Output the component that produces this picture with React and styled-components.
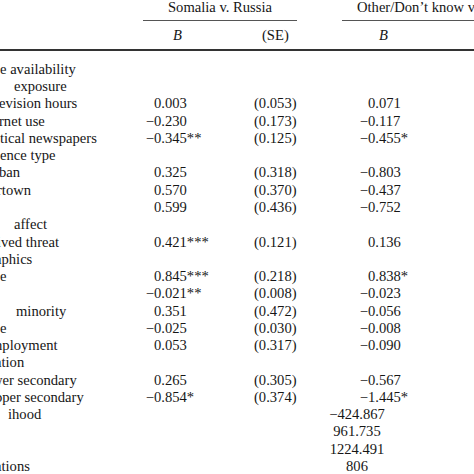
import React from "react";
import styled, { createGlobalStyle } from "styled-components";

const GlobalStyle = createGlobalStyle`
  html, body {
    margin: 0;
    padding: 0;
    background: #ffffff;
  }
  body {
    font-family: "Liberation Serif", "Times New Roman", serif;
    color: #161616;
  }
`;

const Page = styled.div`
  width: 474px;
  height: 474px;
  overflow: hidden;
  background: #ffffff;
  font-size: 14.6px;
  line-height: 17.26px;
`;

const Table = styled.div`
  display: flex;
  flex-direction: column;
  width: 560px;
`;

const Row = styled.div`
  display: grid;
  grid-template-columns: 143px 69px 85px 45px 218px;
  white-space: nowrap;
`;

const GroupRow = styled(Row)`
  height: 21px;
  line-height: 12px;
`;

const SubHeadRow = styled(Row)`
  padding: 6px 0 5px;
  border-bottom: 2px solid #333;
  margin-bottom: 9.6px;
`;

const GroupHead = styled.div`
  grid-column: ${(p) => p.$span};
  border-bottom: 1px solid #555;
  padding-top: 1px;
  text-align: ${(p) => (p.$left ? "left" : "center")};
  padding-left: ${(p) => p.$pad || 0}px;
`;

const ColHead = styled.div`
  grid-column: ${(p) => p.$col};
  font-style: ${(p) => (p.$italic ? "italic" : "normal")};
  text-align: ${(p) => (p.$center ? "center" : "left")};
  padding-left: ${(p) => p.$pad || 0}px;
`;

const Label = styled.div`
  grid-column: 1;
  text-indent: ${(p) => p.$x}px;
  overflow: hidden;
`;

const Cell = styled.div`
  grid-column: ${(p) => p.$col};
  padding-left: ${(p) => p.$pad}px;
`;

const StatCell = styled.div`
  grid-column: 3 / 6;
  text-align: center;
  padding-right: 58px;
`;

const Sign = styled.span`
  display: inline-block;
  width: 9px;
  text-align: right;
  text-indent: 0;
`;

function Num({ v }) {
  if (!v) return null;
  const neg = v.startsWith("−");
  return (
    <>
      <Sign>{neg ? "−" : ""}</Sign>
      {neg ? v.slice(1) : v}
    </>
  );
}

const rows = [
  { label: "e availability", x: 0 },
  { label: "exposure", x: 14 },
  { label: "evision hours", x: -1, b: "0.003", se: "(0.053)", o: "0.071" },
  { label: "rnet use", x: -1, b: "−0.230", se: "(0.173)", o: "−0.117" },
  { label: "tical newspapers", x: 0, b: "−0.345**", se: "(0.125)", o: "−0.455*" },
  { label: "ence type", x: 0 },
  { label: "ban", x: -1, b: "0.325", se: "(0.318)", o: "−0.803" },
  { label: "rtown", x: -3, b: "0.570", se: "(0.370)", o: "−0.437" },
  { label: "", x: 0, b: "0.599", se: "(0.436)", o: "−0.752" },
  { label: "affect", x: 14 },
  { label: "ived threat", x: -3, b: "0.421***", se: "(0.121)", o: "0.136" },
  { label: "aphics", x: -5 },
  { label: "e", x: 0, b: "0.845***", se: "(0.218)", o: "0.838*" },
  { label: "", x: 0, b: "−0.021**", se: "(0.008)", o: "−0.023" },
  { label: "minority", x: 16, b: "0.351", se: "(0.472)", o: "−0.056" },
  { label: "e", x: 0, b: "−0.025", se: "(0.030)", o: "−0.008" },
  { label: "mployment", x: -9, b: "0.053", se: "(0.317)", o: "−0.090" },
  { label: "ation", x: -5 },
  { label: "wer secondary", x: -8, b: "0.265", se: "(0.305)", o: "−0.567" },
  { label: "pper secondary", x: -5, b: "−0.854*", se: "(0.374)", o: "−1.445*" },
  { label: "ihood", x: 8, stat: "−424.867" },
  { label: "", x: 0, stat: "961.735" },
  { label: "", x: 0, stat: "1224.491" },
  { label: "ations", x: -5, stat: "806" },
];

export default function App() {
  return (
    <Page>
      <GlobalStyle />
      <Table>
        <GroupRow>
          <GroupHead $span="2 / 4">Somalia v. Russia</GroupHead>
          <GroupHead $span="5" $left $pad={15}>
            Other/Don’t know v. Russia
          </GroupHead>
        </GroupRow>
        <SubHeadRow>
          <ColHead $col="2" $italic $center>
            B
          </ColHead>
          <ColHead $col="3" $pad={50}>
            (SE)
          </ColHead>
          <ColHead $col="5" $italic $pad={37}>
            B
          </ColHead>
        </SubHeadRow>
        {rows.map((r, i) => (
          <Row key={i}>
            <Label $x={r.x}>{r.label || "\u00a0"}</Label>
            {r.stat ? (
              <StatCell>{r.stat}</StatCell>
            ) : (
              <>
                <Cell $col="2" $pad={2}>
                  <Num v={r.b} />
                </Cell>
                <Cell $col="3" $pad={42}>
                  {r.se}
                </Cell>
                <Cell $col="5" $pad={17}>
                  <Num v={r.o} />
                </Cell>
              </>
            )}
          </Row>
        ))}
      </Table>
    </Page>
  );
}
